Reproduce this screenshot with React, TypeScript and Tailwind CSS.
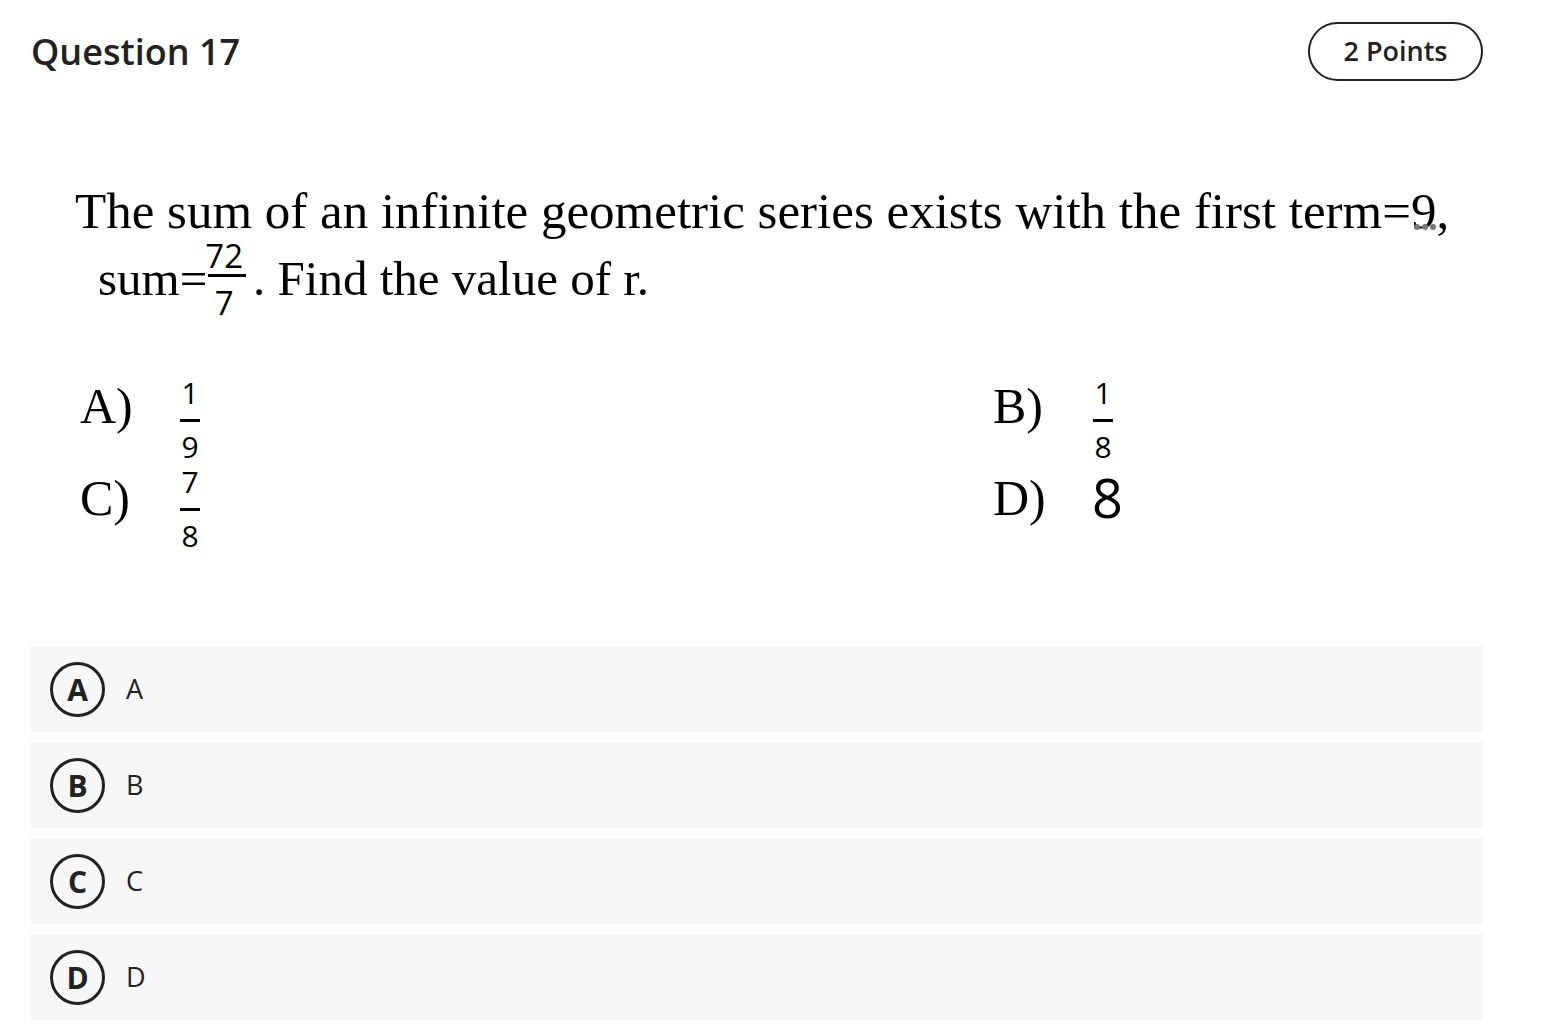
import React from 'react';

const serif = { fontFamily: '"Liberation Serif", "Times New Roman", serif' };
const sans = { fontFamily: '"Open Sans", "Noto Sans", sans-serif' };

interface FractionProps {
    top: string;
    bottom: string;
    className?: string;
    text?: string;
    gap?: string;
    gap2?: string;
}

function Fraction({ top, bottom, className = '', text = 'text-[30px] leading-[22px]', gap = 'mt-[15px]', gap2 = 'mt-[14px]' }: FractionProps) {
    return (
        <span className={`flex flex-col items-center ${text} text-black ${className}`} style={sans}>
            <span>{top}</span>
            <span className={`${gap} h-[3px] w-full min-w-[20px] bg-black`} />
            <span className={gap2}>{bottom}</span>
        </span>
    );
}

const answers = ['A', 'B', 'C', 'D'];

export default function App() {
    return (
        <div className="min-h-[1028px] w-[1544px] bg-white text-[#222]" style={sans}>
            {/* Header */}
            <div className="flex items-center justify-between pl-[31px] pr-[61px] pt-[22px]">
                <h1 className="text-[36px] font-semibold leading-none">Question 17</h1>
                <div className="flex h-[59px] w-[175px] items-center justify-center rounded-full border-2 border-[#222] text-[27px] font-semibold">
                    2 Points
                </div>
            </div>

            {/* Question body */}
            <div className="mt-[96px] pl-[75px] text-black" style={serif}>
                <div className="h-[68px] text-[51px] leading-[68px] whitespace-nowrap">
                    The sum of an infinite geometric series exists with the first term=
                    <span className="relative">
                        9
                        <span className="absolute bottom-[9px] left-[3px] flex gap-[2px]">
                            <span className="h-[6px] w-[6px] rounded-full bg-[#777]" />
                            <span className="h-[6px] w-[6px] rounded-full bg-[#777]" />
                            <span className="h-[6px] w-[6px] rounded-full bg-[#777]" />
                        </span>
                    </span>
                    ,
                </div>
                <div className="flex h-[68px] items-start pl-[23px] text-[49px] leading-[68px] whitespace-nowrap">
                    <span>sum=</span>
                    <Fraction
                        top="72"
                        bottom="7"
                        className="-ml-[2px] -mt-[1px] pr-[4px]"
                        text="text-[33px] leading-[24px]"
                        gap="mt-[6px] -mr-[6px] pr-[6px]"
                        gap2="mt-[14px]"
                    />
                    <span className="pl-[6px]">. Find the value of r.</span>
                </div>
            </div>

            {/* Choices */}
            <div className="mt-[69px] grid grid-cols-[913px_1fr] gap-y-[13px] pl-[80px] text-black">
                <div className="flex items-start">
                    <span className="-mt-[1px] w-[100px] text-[50px] leading-[50px]" style={serif}>A)</span>
                    <Fraction top="1" bottom="9" />
                </div>
                <div className="flex items-start">
                    <span className="-mt-[1px] w-[100px] text-[50px] leading-[50px]" style={serif}>B)</span>
                    <Fraction top="1" bottom="8" />
                </div>
                <div className="flex items-start">
                    <span className="mt-[2px] w-[100px] text-[50px] leading-[50px]" style={serif}>C)</span>
                    <Fraction top="7" bottom="8" />
                </div>
                <div className="flex items-start">
                    <span className="mt-[2px] w-[100px] text-[50px] leading-[50px]" style={serif}>D)</span>
                    <span className="-ml-[1px] -mt-[4px] text-[54px] leading-[60px]" style={sans}>8</span>
                </div>
            </div>

            {/* Answer options */}
            <div className="mt-[99px] ml-[30px] flex w-[1453px] flex-col gap-[10px]">
                {answers.map((a) => (
                    <div key={a} className="flex h-[86px] items-center gap-[21px] bg-[#f7f7f7] pl-[20px]">
                        <span className="flex h-[55px] w-[55px] items-center justify-center rounded-full border-[3px] border-[#222] text-[30px] font-bold text-[#222]">
                            {a}
                        </span>
                        <span className="text-[27px] text-[#222]">{a}</span>
                    </div>
                ))}
            </div>
        </div>
    );
}
